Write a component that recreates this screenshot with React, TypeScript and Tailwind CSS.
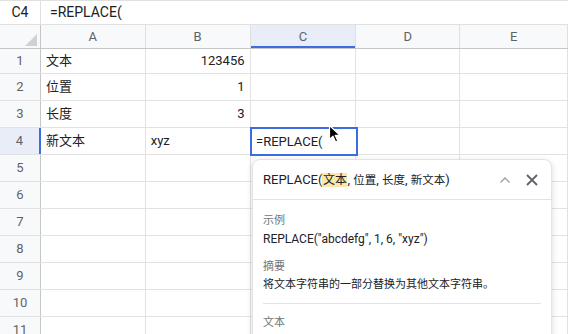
import React from 'react';

const COLS = [
  { id: 'A', w: 'w-[105px]' },
  { id: 'B', w: 'w-[105px]' },
  { id: 'C', w: 'w-[106px]' },
  { id: 'D', w: 'w-[104px]' },
  { id: 'E', w: 'w-[108px]' },
];

const ROWS: { n: number; cells: Record<string, { text: string; align?: 'right' }> }[] = [
  { n: 1, cells: { A: { text: '文本' }, B: { text: '123456', align: 'right' } } },
  { n: 2, cells: { A: { text: '位置' }, B: { text: '1', align: 'right' } } },
  { n: 3, cells: { A: { text: '长度' }, B: { text: '3', align: 'right' } } },
  { n: 4, cells: { A: { text: '新文本' }, B: { text: 'xyz' } } },
  { n: 5, cells: {} },
  { n: 6, cells: {} },
  { n: 7, cells: {} },
  { n: 8, cells: {} },
  { n: 9, cells: {} },
  { n: 10, cells: {} },
  { n: 11, cells: {} },
];

const FONT = "font-['Roboto','Noto_Sans_CJK_SC',sans-serif]";

// chinese runs in the popup render a bit smaller than the latin text
const Cjk = ({ children }: { children: React.ReactNode }) => (
  <span className="text-[11.5px]">{children}</span>
);

export default function App() {
  return (
    <div className={`relative w-[568px] h-[334px] overflow-hidden bg-white text-[13px] text-[#202124] ${FONT}`}>
      {/* formula bar */}
      <div className="flex h-[25px] border-t border-b border-[#e0e0e0]">
        <div className="w-[41px] flex items-center justify-center border-r border-[#e0e0e0] text-[14px] text-[#202124]">C4</div>
        <div className="flex-1 flex items-center pl-[9px] text-[14px]">=REPLACE(</div>
      </div>

      {/* column headers */}
      <div className="flex h-[24px] bg-[#f8f9fa] border-b border-[#c4c7c5]">
        <div className="relative w-[41px] border-r border-[#c4c7c5]">
          <div className="absolute right-[3px] bottom-[2px] w-0 h-0 border-l-[12px] border-l-transparent border-b-[12px] border-b-[#cfd1d4]" />
        </div>
        {COLS.map(c => (
          <div
            key={c.id}
            className={`${c.w} flex items-center justify-center border-r border-[#e0e0e0] text-[#5f6368] ${
              c.id === 'C' ? 'bg-[#e8edf8] shadow-[inset_0_-2px_0_#3d6be0]' : ''
            }`}
          >
            {c.id}
          </div>
        ))}
      </div>

      {/* rows */}
      {ROWS.map(r => (
        <div key={r.n} className={`flex ${r.n === 1 ? 'h-[25px]' : 'h-[27px]'} border-b border-[#e2e2e2]`}>
          <div
            className={`w-[41px] flex items-center justify-center border-r text-[#5f6368] ${
              r.n === 4 ? 'bg-[#e8edf8] border-r-2 border-[#3d6be0]' : 'bg-[#f8f9fa] border-[#c4c7c5]'
            }`}
          >
            {r.n}
          </div>
          {COLS.map(c => {
            const cell = r.cells[c.id];
            return (
              <div
                key={c.id}
                className={`${c.w} flex items-center px-[5px] border-r border-[#e2e2e2] ${
                  cell?.align === 'right' ? 'justify-end' : ''
                }`}
              >
                {cell?.text}
              </div>
            );
          })}
        </div>
      ))}

      {/* active cell editor */}
      <div className="absolute left-[250px] top-[127px] w-[108px] h-[29px] border-2 border-[#3d6be0] bg-white flex items-center pl-[4px] text-[13px]">
        =REPLACE(
      </div>

      {/* mouse pointer */}
      <svg className="absolute left-[328px] top-[124px]" width="14" height="20" viewBox="0 0 14 20">
        <path d="M1.5 1.5 L1.5 15.5 L5 12.2 L7.6 18 L9.8 17 L7.3 11.4 L12 11.4 Z" fill="#000" stroke="#fff" strokeWidth="1.2" strokeLinejoin="round" />
      </svg>

      {/* formula help popup */}
      <div className="absolute left-[252px] top-[159px] w-[300px] h-[200px] bg-white rounded-[8px] border border-[#e3e3e3] shadow-[0_2px_6px_rgba(0,0,0,0.15)]">
        <div className="flex items-center justify-between h-[40px] pl-[10px] pr-[12px] border-b border-[#e3e3e3]">
          <div className="text-[13px] text-[#202124]">
            REPLACE(<span className="bg-[#fbe7a8] text-[12px] px-[0.5px]">文本</span>, <Cjk>位置</Cjk>, <Cjk>长度</Cjk>, <Cjk>新文本</Cjk>)
          </div>
          <div className="flex items-center gap-[14px]">
            <svg width="12" height="8" viewBox="0 0 12 8">
              <path d="M1.5 6.5 L6 2 L10.5 6.5" fill="none" stroke="#9aa0a6" strokeWidth="1.3" />
            </svg>
            <svg width="14" height="14" viewBox="0 0 14 14">
              <path d="M2 2 L12 12 M12 2 L2 12" fill="none" stroke="#5f6368" strokeWidth="1.8" />
            </svg>
          </div>
        </div>
        <div className="px-[10px] pt-[13px]">
          <div className="text-[11px] text-[#70757a] leading-[16px]">示例</div>
          <div className="text-[12px] leading-[18px] mt-[1px]">REPLACE("abcdefg", 1, 6, "xyz")</div>
          <div className="text-[11px] text-[#70757a] leading-[16px] mt-[11px]">摘要</div>
          <div className="text-[11px] leading-[18px] mt-[1px]">将文本字符串的一部分替换为其他文本字符串。</div>
          <div className="border-t border-[#e3e3e3] mt-[9px]" />
          <div className="text-[11px] text-[#70757a] leading-[16px] mt-[11px]">文本</div>
        </div>
      </div>
    </div>
  );
}
